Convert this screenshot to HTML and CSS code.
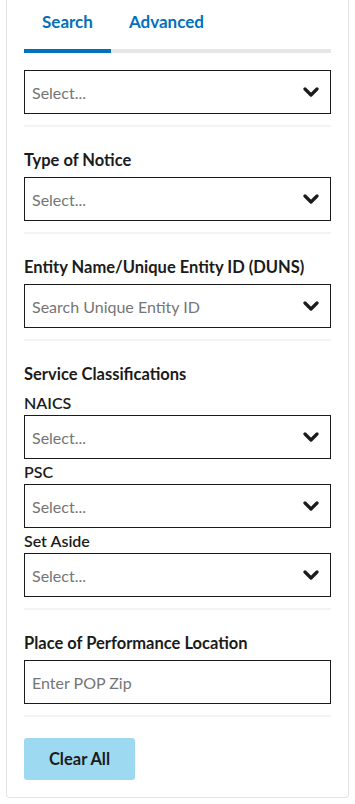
FILE: index.html
```html
<!DOCTYPE html>
<html>
<head>
  <title>Opportunity Search Filters</title>
  <link rel="stylesheet" href="styles.css">
</head>

<body>
  <div class="filter-card">
    <div class="tabs">
      <button type="button" class="tab active">Search</button>
      <button type="button" class="tab">Advanced</button>
    </div>

    <div class="section first">
      <div class="select-box">
        <span class="placeholder">Select...</span>
        <svg class="chevron" width="16" height="10" viewBox="0 0 16 10"><polyline points="2,2 8,8 14,2" fill="none" stroke="#1b1b1b" stroke-width="3.2" stroke-linecap="round" stroke-linejoin="round"/></svg>
      </div>
    </div>

    <div class="section">
      <label class="field-title">Type of Notice</label>
      <div class="select-box">
        <span class="placeholder">Select...</span>
        <svg class="chevron" width="16" height="10" viewBox="0 0 16 10"><polyline points="2,2 8,8 14,2" fill="none" stroke="#1b1b1b" stroke-width="3.2" stroke-linecap="round" stroke-linejoin="round"/></svg>
      </div>
    </div>

    <div class="section">
      <label class="field-title">Entity Name/Unique Entity ID (DUNS)</label>
      <div class="select-box">
        <span class="placeholder">Search Unique Entity ID</span>
        <svg class="chevron" width="16" height="10" viewBox="0 0 16 10"><polyline points="2,2 8,8 14,2" fill="none" stroke="#1b1b1b" stroke-width="3.2" stroke-linecap="round" stroke-linejoin="round"/></svg>
      </div>
    </div>

    <div class="section">
      <div class="group-title">Service Classifications</div>
      <label class="sub-label">NAICS</label>
      <div class="select-box tight">
        <span class="placeholder">Select...</span>
        <svg class="chevron" width="16" height="10" viewBox="0 0 16 10"><polyline points="2,2 8,8 14,2" fill="none" stroke="#1b1b1b" stroke-width="3.2" stroke-linecap="round" stroke-linejoin="round"/></svg>
      </div>
      <label class="sub-label">PSC</label>
      <div class="select-box tight">
        <span class="placeholder">Select...</span>
        <svg class="chevron" width="16" height="10" viewBox="0 0 16 10"><polyline points="2,2 8,8 14,2" fill="none" stroke="#1b1b1b" stroke-width="3.2" stroke-linecap="round" stroke-linejoin="round"/></svg>
      </div>
      <label class="sub-label">Set Aside</label>
      <div class="select-box">
        <span class="placeholder">Select...</span>
        <svg class="chevron" width="16" height="10" viewBox="0 0 16 10"><polyline points="2,2 8,8 14,2" fill="none" stroke="#1b1b1b" stroke-width="3.2" stroke-linecap="round" stroke-linejoin="round"/></svg>
      </div>
    </div>

    <div class="section">
      <label class="field-title">Place of Performance Location</label>
      <input type="text" class="text-input" placeholder="Enter POP Zip">
    </div>

    <div class="actions">
      <button type="button" class="clear-button">Clear All</button>
    </div>
  </div>
</body>
</html>
```

FILE: styles.css
```css
body {
  font-family: Lato, "Open Sans", sans-serif;
  background-color: #fff;
  margin: 0;
  padding: 0 6px 7px 6px;
  color: #1b1b1b;
}

.filter-card {
  border: 1px solid #e4e4e4;
  border-top: none;
  border-radius: 0 0 4px 4px;
  padding: 0 17px 17px 17px;
}

.tabs {
  display: flex;
  background: linear-gradient(#e6e6e6, #e6e6e6) no-repeat left bottom / 100% 4px;
}

.tab {
  font-family: inherit;
  font-size: 17px;
  font-weight: bold;
  color: #0071bc;
  background: none;
  border: none;
  border-bottom: 4px solid transparent;
  padding: 0 18px 7px 18px;
  height: 53px;
  box-sizing: border-box;
  cursor: pointer;
}

.tab.active {
  border-bottom-color: #0071bc;
}

.section {
  display: flex;
  flex-direction: column;
  padding-bottom: 11px;
  border-bottom: 2px solid #f1f3f6;
  padding-top: 23px;
}

.section.first {
  padding-top: 17px;
}

.field-title {
  font-size: 16.5px;
  font-weight: bold;
  line-height: 20px;
  margin-bottom: 7px;
}

.group-title {
  font-size: 16.5px;
  font-weight: bold;
  line-height: 20px;
  margin-bottom: 9px;
}

.sub-label {
  font-size: 16px;
  font-weight: 600;
  line-height: 20px;
  margin-bottom: 2px;
}

.select-box {
  display: flex;
  align-items: center;
  justify-content: space-between;
  height: 44px;
  box-sizing: border-box;
  border: 1px solid #1b1b1b;
  padding: 0 11px 0 7px;
}

.select-box.tight {
  margin-bottom: 3px;
}

.placeholder {
  font-size: 16px;
  color: #757575;
}

.chevron {
  display: block;
}

.text-input {
  font-family: inherit;
  font-size: 16px;
  height: 44px;
  box-sizing: border-box;
  border: 1px solid #1b1b1b;
  border-radius: 0;
  padding: 0 7px;
  color: #1b1b1b;
}

.text-input::placeholder {
  color: #757575;
}

.actions {
  padding-top: 21px;
}

.clear-button {
  font-family: inherit;
  font-size: 16.5px;
  font-weight: bold;
  color: #1b1b1b;
  background-color: #9ddaf1;
  border: none;
  border-radius: 3px;
  width: 111px;
  height: 42px;
  cursor: pointer;
}
```
